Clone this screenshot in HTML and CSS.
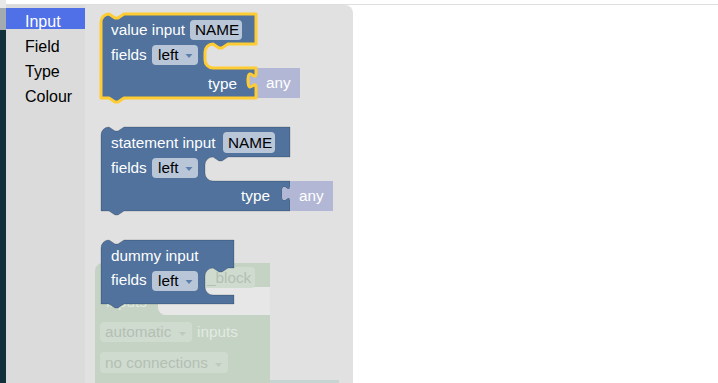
FILE: index.html
```html
<!DOCTYPE html>
<html>
<head>
  <meta charset="UTF-8">
  <title>Block Factory</title>
  <link rel="stylesheet" href="styles.css">
</head>
<body>

  <div class="page">
    <div class="edge"></div>
    <div class="main">
      <div class="topbar"></div>
      <div class="workspace">
        <div class="toolbox">
          <div class="cat selected">Input</div>
          <div class="cat">Field</div>
          <div class="cat">Type</div>
          <div class="cat">Colour</div>
        </div>

        <div class="flyout">
          <svg class="blocks" width="268" height="378" viewBox="85 5 268 378">
            <!-- factory base block, seen through the flyout -->
            <g class="ghost">
              <path class="ghost-body" d="M95,271 A8,8 0 0 1 103,263 H270 V287 H166 a8,8 0 0 0 -8,8 V307 a8,8 0 0 0 8,8 H270 V390 H95 Z"/>
              <path class="ghost-hole" d="M270,287 H166 a8,8 0 0 0 -8,8 V307 a8,8 0 0 0 8,8 H270 Z"/>
              <rect class="ghost-field" x="198" y="267" width="57" height="21" rx="4"/>
              <text class="ghost-text" x="207" y="283">_block</text>
              <text class="ghost-label" x="106" y="307">inputs</text>
              <rect class="ghost-field" x="100" y="322" width="92" height="20" rx="4"/>
              <text class="ghost-text" x="105" y="337">automatic</text>
              <polygon class="ghost-arrow" points="179,332 186,332 182.5,336"/>
              <text class="ghost-label" x="197" y="337">inputs</text>
              <rect class="ghost-field" x="100" y="352" width="128" height="21" rx="4"/>
              <text class="ghost-text" x="105" y="368">no connections</text>
              <polygon class="ghost-arrow" points="215,363 222,363 218.5,367"/>
              <rect class="ghost-tail" x="270" y="380" width="69" height="10"/>
            </g>

            <!-- dummy input -->
            <path class="block edged" d="M101,248 A8,8 0 0 1 109,240 l6,4 3,0 6,-4 H234 V268 H228 l-6,4 -3,0 -6,-4 a8,8 0 0 0 -8,8 V287 a8,8 0 0 0 8,8 H234 V304 H124 l-6,4 -3,0 -6,-4 H101 Z"/>
            <text class="label" x="111" y="261">dummy input</text>
            <text class="label" x="111" y="285">fields</text>
            <rect class="field" x="152" y="271" width="46" height="20" rx="4"/>
            <text class="field-text" x="158" y="286">left</text>
            <polygon class="arrow" points="185.5,280 192.5,280 189,284"/>

            <!-- statement input -->
            <path class="block edged" d="M101,135 A8,8 0 0 1 109,127 l6,4 3,0 6,-4 H290 V157 H228 l-6,4 -3,0 -6,-4 a8,8 0 0 0 -8,8 V173 a8,8 0 0 0 8,8 H290 V186 c0,10 -8,-8 -8,7.5 s8,-2.5 8,7.5 V211 H124 l-6,4 -3,0 -6,-4 H101 Z"/>
            <text class="label" x="111" y="148">statement input</text>
            <rect class="field" x="223" y="132" width="52" height="21" rx="4"/>
            <text class="field-text" x="228" y="148">NAME</text>
            <text class="label" x="111" y="173">fields</text>
            <rect class="field" x="152" y="158" width="46" height="20" rx="4"/>
            <text class="field-text" x="158" y="173">left</text>
            <polygon class="arrow" points="185.5,167 192.5,167 189,171"/>
            <text class="label" x="241" y="201">type</text>
            <path class="shadow" d="M290,181 H333 V211 H290 V201 c0,-10 -8,8 -8,-7.5 s8,2.5 8,-7.5 Z"/>
            <text class="label" x="299" y="201">any</text>

            <!-- value input (selected) -->
            <path class="block" d="M101,22 A8,8 0 0 1 109,14 l6,4 3,0 6,-4 H256 V44 H228 l-6,4 -3,0 -6,-4 a8,8 0 0 0 -8,8 V60 a8,8 0 0 0 8,8 H256 V73 c0,10 -8,-8 -8,7.5 s8,-2.5 8,7.5 V98 H124 l-6,4 -3,0 -6,-4 H101 Z"/>
            <text class="label" x="111" y="35">value input</text>
            <rect class="field" x="190" y="20" width="52" height="20" rx="4"/>
            <text class="field-text" x="195" y="35">NAME</text>
            <text class="label" x="111" y="60">fields</text>
            <rect class="field" x="152" y="45" width="46" height="20" rx="4"/>
            <text class="field-text" x="158" y="60">left</text>
            <polygon class="arrow" points="185.5,54 192.5,54 189,58"/>
            <text class="label" x="208" y="89">type</text>
            <path class="shadow" d="M256,68 H300 V98 H256 V88 c0,-10 -8,8 -8,-7.5 s8,2.5 8,-7.5 Z"/>
            <text class="label" x="266" y="88">any</text>
            <path class="selected-outline" d="M101,22 A8,8 0 0 1 109,14 l6,4 3,0 6,-4 H256 V44 H228 l-6,4 -3,0 -6,-4 a8,8 0 0 0 -8,8 V60 a8,8 0 0 0 8,8 H256 V73 c0,10 -8,-8 -8,7.5 s8,-2.5 8,7.5 V98 H124 l-6,4 -3,0 -6,-4 H101 Z"/>
          </svg>
        </div>

        <div class="canvas"></div>
      </div>
    </div>
  </div>

</body>
</html>
```

FILE: styles.css
```css
html, body {
  margin: 0;
  padding: 0;
  width: 100%;
  height: 100%;
  overflow: hidden;
  background: #fff;
  font-family: "Liberation Sans", Arial, sans-serif;
}

.page {
  display: flex;
  height: 383px;
}

.edge {
  width: 6px;
  background: linear-gradient(#e9e9e9 0 8px, #a3abb0 8px 30px, #12303a 30px);
}

.main {
  flex: 1;
  display: flex;
  flex-direction: column;
}
.topbar {
  height: 4px;
  border-bottom: 1px solid #dedede;
}
.workspace {
  flex: 1;
  display: flex;
}

.toolbox {
  width: 79px;
  background: #dbdbdb;
  padding-top: 3px;
  box-sizing: border-box;
}
.cat {
  height: 21px;
  margin-bottom: 4px;
  padding: 5px 0 0 19px;
  box-sizing: border-box;
  font-size: 16px;
  line-height: 18px;
  color: #000;
}
.cat.selected {
  background: #5070e8;
  color: #fff;
}

.flyout {
  width: 268px;
  background: #e1e1e1;
  border-top-right-radius: 8px;
  overflow: hidden;
}
.blocks {
  display: block;
  font-family: "Liberation Sans", Arial, sans-serif;
  font-size: 15.3px;
}

.canvas {
  flex: 1;
}

/* blocks */
.block {
  fill: #50729d;
}
.block.edged {
  stroke: rgba(0,0,0,0.18);
  stroke-width: 1;
}
.shadow {
  fill: #b2b7d5;
}
.selected-outline {
  fill: none;
  stroke: #fc3;
  stroke-width: 3;
  stroke-linejoin: round;
}
.label {
  fill: #fff;
}
.field {
  fill: #fff;
  fill-opacity: 0.6;
}
.field-text {
  fill: #000;
}
.arrow {
  fill: #5d7fab;
}

/* faded base block behind flyout */
.ghost-body {
  fill: #c4d3c4;
}
.ghost-hole {
  fill: #e7e7e7;
}
.ghost-field {
  fill: #cfdbcf;
}
.ghost-text {
  fill: #b4bfb4;
}
.ghost-label {
  fill: #e2eae2;
}
.ghost-arrow {
  fill: #bfcabf;
}
.ghost-tail {
  fill: #c7d5d2;
}
```
